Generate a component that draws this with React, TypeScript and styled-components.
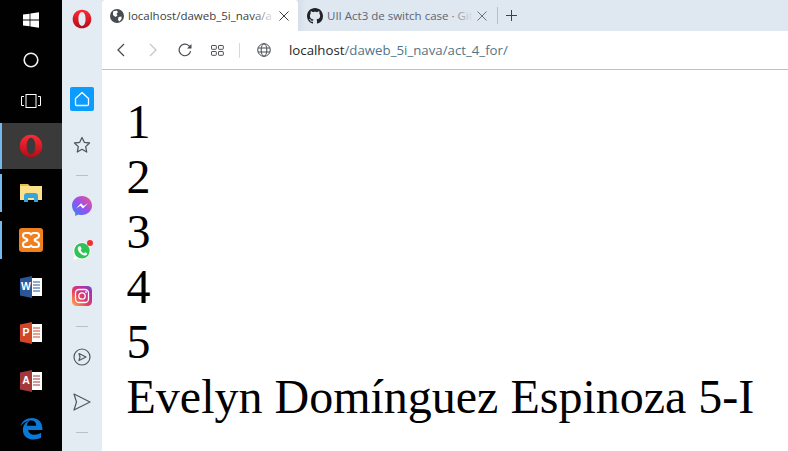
import React from "react";
import styled, { createGlobalStyle } from "styled-components";

const Global = createGlobalStyle`
  html, body { margin: 0; padding: 0; background: #fff; }
  body { width: 788px; height: 451px; overflow: hidden; }
  #root { width: 788px; height: 451px; }
`;
const Screen = styled.div`display: flex; width: 788px; height: 451px; overflow: hidden;`;
const Taskbar = styled.nav`width: 62px; flex: none; background: #010101; display: flex; flex-direction: column;`;
const TaskItem = styled.div<{ $h: number; $active?: boolean; $running?: boolean }>`
  position: relative; height: ${(p) => p.$h}px; flex: none; display: flex; align-items: center; justify-content: center;
  background: ${(p) => (p.$active ? "#3a3a3a" : "transparent")};
  &::before {
    content: ""; display: ${(p) => (p.$running ? "block" : "none")}; position: absolute; left: 0; top: 0; bottom: 0; width: 2px; background: #76b9ed;
  }
`;
const Gap = styled.div<{ $h: number }>`height: ${(p) => p.$h}px; flex: none;`;
const Sidebar = styled.aside`width: 40px; flex: none; background: #e3ebf3; display: flex; flex-direction: column; align-items: center;`;
const SideSlot = styled.div<{ $h: number }>`height: ${(p) => p.$h}px; flex: none; display: flex; align-items: center; justify-content: center; position: relative;`;
const Rule = styled.div`width: 12px; height: 1px; background: #b9c0c8;`;
const Dot = styled.span`position: absolute; right: -2px; top: 6px; width: 6px; height: 6px; border-radius: 50%; background: #f0312f;`;
const Main = styled.div`flex: 1; min-width: 0; display: flex; flex-direction: column;`;
const TabStrip = styled.div`height: 31px; flex: none; background: #dfe8f1; display: flex; align-items: stretch;`;
const Tab = styled.div<{ $active?: boolean; $w: number }>`
  width: ${(p) => p.$w}px; flex: none; display: flex; align-items: center; gap: 4px; box-sizing: border-box;
  padding: 0 ${(p) => (p.$active ? 9 : 10)}px 0 ${(p) => (p.$active ? 8 : 9)}px;
  background: ${(p) => (p.$active ? "#fff" : "linear-gradient(to right, #d6dfe9, #dfe7f0 8px)")};
  border-radius: ${(p) => (p.$active ? "4px 4px 0 0" : "0")};
  font: 11.5px "Open Sans", "Liberation Sans", sans-serif;
  color: ${(p) => (p.$active ? "#3a3f47" : "#5d6670")};
`;
const TabTitle = styled.span<{ $fade: string }>`
  flex: 1; min-width: 0; white-space: nowrap; position: relative;
  &::after { content: ""; position: absolute; right: 0; top: 0; bottom: 0; width: 22px; background: linear-gradient(to right, transparent, ${(p) => p.$fade}); }
`;
const Divider = styled.div`width: 1px; height: 17px; background: #b5bfc9; align-self: center;`;
const NewTab = styled.div`width: 26px; display: flex; align-items: center; justify-content: center;`;
const Toolbar = styled.div`height: 38px; flex: none; background: #fff; border-bottom: 1px solid #bcc1c6; display: flex; align-items: center; padding-left: 9px;`;
const ToolIcon = styled.div<{ $w: number; $ml?: number }>`width: ${(p) => p.$w}px; margin-left: ${(p) => p.$ml ?? 0}px; flex: none; display: flex; align-items: center; justify-content: center;`;
const Sep = styled.div`width: 1px; height: 15px; background: #d5d9de; margin: 0 16px 0 4px;`;
const Url = styled.div`margin-left: 17px; font: 13.25px "Open Sans", "Liberation Sans", sans-serif; color: #557585; white-space: nowrap;`;
const Host = styled.span`color: #22262b;`;
const Page = styled.main`flex: 1; padding: 24px 0 0 24.5px; font: 48px "Liberation Serif", "Times New Roman", serif; color: #000; white-space: nowrap;`;

const OperaLogo = ({ s, id }: { s: number; id: string }) => (
  <svg width={s} height={s} viewBox="0 0 24 24">
    <defs><linearGradient id={id} x1="0" y1="0" x2="0" y2="1"><stop offset="0" stopColor="#ff2a35" /><stop offset="1" stopColor="#b30d18" /></linearGradient></defs>
    <path fill={`url(#${id})`} fillRule="evenodd" d="M12 .8C5.600.8 .8 5.700.8 12s4.800 11.200 11.200 11.200S23.200 18.300 23.200 12 18.400.8 12 .8zm0 2.900c2.700 0 4.300 3.700 4.300 8.300s-1.600 8.300-4.300 8.300S7.700 16.600 7.700 12 9.300 3.700 12 3.700z" />
  </svg>
);
const WinLogo = () => (
  <svg width="16" height="16" viewBox="0 0 16 16"><path fill="#fff" d="M0 2.600 6.600 1.700V7.500H0zM7.400 1.500 16 .2V7.500H7.400zM0 8.400H6.600V14.300L0 13.400zM7.400 8.400H16V15.800L7.400 14.500z" /></svg>
);
const Cortana = () => (
  <svg width="16" height="16" viewBox="0 0 16 16"><circle cx="8" cy="8" r="6.800" fill="none" stroke="#f1f1f1" strokeWidth="1.600" /></svg>
);
const TaskView = () => (
  <svg width="20" height="15" viewBox="0 0 20 15" fill="none" stroke="#fff" strokeWidth="1"><rect x="5" y=".5" width="10" height="13" /><path d="M3 2.500H.5V11.500H3M17 2.500H19.500V11.500H17" /></svg>
);
const Folder = () => (
  <svg width="22" height="20" viewBox="0 0 22 20"><path fill="#e4bd52" d="M0 1h8l2 2h12v4H0z" /><path fill="#fde08a" d="M0 3h22v14H0z" /><path fill="#35a6dc" d="M4 13c0-2 1-3 3-3h8c2 0 3 1 3 3v6h-4v-4H8v4H4z" /></svg>
);
const Xampp = () => (
  <svg width="24" height="24" viewBox="0 0 24 24"><rect width="24" height="24" rx="3" fill="#f0801e" /><path fill="none" stroke="#fff" strokeWidth="2" d="M6.500 5h3.500c1 0 1.500 1.500 2 1.500S13 5 14 5h3.500C19 5 20 6 20 7.500S19 10 17.500 10.500 15.500 11.500 15.500 12s.5 1 2 1.500 2.500 1.500 2.500 3S19 19 17.500 19H14c-1 0-1.500-1.500-2-1.500S11 19 10 19H6.500C5 19 4 18 4 16.500s1-2.500 2.500-3 2-1 2-1.500-.5-1-2-1.500S4 9 4 7.500 5 5 6.500 5z" /></svg>
);
const Office = ({ c, page }: { c: string; page: React.ReactNode }) => (
  <svg width="24" height="24" viewBox="0 0 24 24"><path fill="#fff" d="M10 3h13v18H10z" />{page}<path fill={c} d="M1 3.500 13 1v22L1 20.500z" /></svg>
);
const lines = (c: string) => <path stroke={c} strokeWidth="1.200" d="M14 7h7M14 10h7M14 13h7M14 16h7" />;
const Letter = styled.span`
  position: absolute; left: 1.500px; top: 5px; width: 11px; text-align: center;
  font: bold 10.500px "Liberation Sans", sans-serif; color: #fff;
`;
const OfficeWrap = styled.div`position: relative; width: 24px; height: 24px;`;
const EdgeLogo = () => (
  <svg width="23" height="23" viewBox="0 0 24 24"><path fill="#0a78d7" d="M12.500 1C19 1 23.500 5.500 23.500 13.500H8.600c.3 3.200 2.900 5 6.200 5 2.700 0 5.200-.8 7.200-2v5.200c-2.300 1.200-5 1.800-8 1.800C7 23.500 3 19.300 3 13.500c0-4.700 3-8.700 7.300-9.800-2 1.500-3 3.300-3.200 5.300h9.800C16.900 5.500 15 3.700 11.500 3.700 7 3.700 3 6.200.5 10 1.500 5 6 1 12.500 1z" /></svg>
);
const HomeIcon = () => (
  <svg width="24" height="24" viewBox="0 0 24 24"><rect width="24" height="24" rx="2" fill="#0a9cff" /><path fill="none" stroke="#fff" strokeWidth="1.300" strokeLinejoin="round" d="M5.500 11.500 12 5.500l6.500 6v5.800c0 .8-.5 1.200-1.200 1.200H6.700c-.7 0-1.200-.4-1.200-1.200z" /></svg>
);
const Star = () => (
  <svg width="18" height="18" viewBox="0 0 18 18"><path fill="none" stroke="#50585f" strokeWidth="1.300" strokeLinejoin="round" d="M9 1.500 11.300 6.300 16.500 7 12.700 10.600 13.700 16 9 13.300 4.300 16 5.300 10.600 1.500 7 6.700 6.300z" /></svg>
);
const Messenger = () => (
  <svg width="20" height="20" viewBox="0 0 20 20">
    <defs><linearGradient id="ms" x1="0" y1="1" x2="1" y2="0"><stop offset="0" stopColor="#2a8cf5" /><stop offset=".5" stopColor="#9a4ff0" /><stop offset="1" stopColor="#f2567e" /></linearGradient></defs>
    <path fill="url(#ms)" d="M10 0C4.400 0 0 4.100 0 9.600c0 2.900 1.200 5.400 3.200 7.100V20l3-1.600c1.200.4 2.500.6 3.800.6 5.600 0 10-4.100 10-9.400S15.600 0 10 0z" />
    <path fill="#fff" d="M4 12.500 9 7.200l2.600 2.700 4.400-2.700-5 5.300-2.600-2.700z" />
  </svg>
);
const Whatsapp = () => (
  <svg width="18" height="18" viewBox="0 0 18 18"><path fill="#fff" d="M9 .2a8.600 8.600 0 0 0-7.300 13L.4 17.800l4.700-1.300A8.600 8.600 0 1 0 9 .2z" /><circle cx="9" cy="8.800" r="7.700" fill="#2fc254" /><path fill="#fff" d="M6.100 4.300c-.9.400-1.500 1.400-1.300 2.800.5 2.900 3.400 5.900 6.300 6.400 1.500.2 2.600-.3 3-1.300.1-.4.100-.8 0-.9l-2-1c-.3 0-.9 1-1.200 1.100-1-.2-3.100-2.200-3.300-3.300.1-.4 1.100-.9 1-1.300L7.600 4.500c-.2-.3-1-.4-1.500-.2z" /></svg>
);
const Instagram = () => (
  <svg width="20" height="20" viewBox="0 0 20 20">
    <defs><linearGradient id="ig" x1="0" y1="1" x2="1" y2="0"><stop offset="0" stopColor="#fdb44b" /><stop offset=".4" stopColor="#e6405f" /><stop offset=".75" stopColor="#b42fa5" /><stop offset="1" stopColor="#5458d0" /></linearGradient></defs>
    <rect width="20" height="20" rx="4.500" fill="url(#ig)" />
    <rect x="3.500" y="3.500" width="13" height="13" rx="3.500" fill="none" stroke="#fff" strokeWidth="1.300" />
    <circle cx="10" cy="10" r="3.200" fill="none" stroke="#fff" strokeWidth="1.300" />
    <circle cx="14" cy="6" r=".9" fill="#fff" />
  </svg>
);
const Player = () => (
  <svg width="18" height="18" viewBox="0 0 18 18" fill="none" stroke="#50585f" strokeWidth="1.200"><circle cx="9" cy="9" r="8" /><path strokeLinejoin="round" d="M6 5.500 13 9 6 12.500 7 9z" /></svg>
);
const Send = () => (
  <svg width="18" height="18" viewBox="0 0 18 18"><path fill="none" stroke="#50585f" strokeWidth="1.200" strokeLinejoin="round" d="M1 1 17 9 1 17 3.500 9z" /></svg>
);
const Globe = ({ c = "#474c52", s = 14 }: { c?: string; s?: number }) => (
  <svg width={s} height={s} viewBox="0 0 14 14" fill="none" stroke={c} strokeWidth="1"><circle cx="7" cy="7" r="6.300" /><ellipse cx="7" cy="7" rx="2.800" ry="6.300" /><path d="M1 5h12M1 9h12" /></svg>
);
const GlobeSolid = () => (
  <svg width="14" height="14" viewBox="0 0 14 14"><circle cx="7" cy="7" r="7" fill="#474c52" /><path fill="#fff" d="M3 2.500 6.500 1.500 8 3 6.500 5 7.500 6.500 5.500 8 3 6zM8.500 8 11.500 7.500 11.500 10 9.500 12.500 8 11z" /></svg>
);
const GitHub = () => (
  <svg width="16" height="16" viewBox="0 0 16 16"><path fill="#202428" d="M8 0C3.580 0 0 3.580 0 8c0 3.540 2.290 6.530 5.470 7.590.4.070.55-.17.550-.38 0-.19-.01-.82-.01-1.490-2.010.37-2.530-.49-2.690-.94-.09-.23-.48-.94-.82-1.130-.28-.15-.68-.52-.01-.53.630-.01 1.080.58 1.230.82.720 1.210 1.870.87 2.330.66.070-.52.280-.87.510-1.070-1.780-.2-3.640-.89-3.640-3.950 0-.87.310-1.590.820-2.150-.08-.2-.36-1.020.08-2.120 0 0 .67-.21 2.200.82.640-.18 1.320-.27 2-.27s1.360.09 2 .27c1.530-1.040 2.200-.82 2.200-.82.440 1.100.16 1.920.08 2.120.51.560.82 1.270.82 2.150 0 3.070-1.870 3.750-3.650 3.950.29.250.54.730.54 1.480 0 1.070-.01 1.930-.01 2.200 0 .21.150.46.550.38A8.010 8.010 0 0 0 16 8c0-4.420-3.580-8-8-8z" /></svg>
);
const Close = ({ c }: { c: string }) => (
  <svg width="10" height="10" viewBox="0 0 10 10"><path stroke={c} strokeWidth="1" d="M.5.5l9 9M9.500.5l-9 9" /></svg>
);
const Plus = () => (
  <svg width="11" height="11" viewBox="0 0 11 11"><path stroke="#3c4249" strokeWidth="1" d="M5.500 0v11M0 5.500h11" /></svg>
);
const Chevron = ({ left, c }: { left?: boolean; c: string }) => (
  <svg width="9" height="14" viewBox="0 0 9 14"><path fill="none" stroke={c} strokeWidth="1.300" d={left ? "M8 1 2 7l6 6" : "M1 1l6 6-6 6"} /></svg>
);
const Reload = () => (
  <svg width="14" height="14" viewBox="0 0 14 14" fill="none" stroke="#474c52" strokeWidth="1.200"><path d="M12.600 8.200A5.800 5.800 0 1 1 10.800 2.600L12.800 4.500" /><path fill="#474c52" stroke="none" d="M13.500 1v4.500H9z" /></svg>
);
const Grid = () => (
  <svg width="13" height="11" viewBox="0 0 13 11" fill="none" stroke="#474c52" strokeWidth="1"><rect x=".5" y=".5" width="4.800" height="3.800" rx=".6" /><rect x="7.500" y=".5" width="4.800" height="3.800" rx=".6" /><rect x=".5" y="6.500" width="4.800" height="3.800" rx=".6" /><rect x="7.500" y="6.500" width="4.800" height="3.800" rx=".6" /></svg>
);

export default function App() {
  return (
    <Screen>
      <Global />
      <Taskbar>
        <TaskItem $h={40}><WinLogo /></TaskItem>
        <TaskItem $h={40}><Cortana /></TaskItem>
        <TaskItem $h={43}><TaskView /></TaskItem>
        <TaskItem $h={46} $active $running><OperaLogo s={24} id="op1" /></TaskItem>
        <Gap $h={5} />
        <TaskItem $h={38} $running><Folder /></TaskItem>
        <Gap $h={9} />
        <TaskItem $h={38} $running><Xampp /></TaskItem>
        <TaskItem $h={56}><OfficeWrap><Office c="#2b5797" page={lines("#2b5797")} /><Letter>W</Letter></OfficeWrap></TaskItem>
        <TaskItem $h={36}><OfficeWrap><Office c="#d24726" page={lines("#d24726")} /><Letter>P</Letter></OfficeWrap></TaskItem>
        <TaskItem $h={60}><OfficeWrap><Office c="#a4373a" page={lines("#a4373a")} /><Letter>A</Letter></OfficeWrap></TaskItem>
        <TaskItem $h={34}><EdgeLogo /></TaskItem>
      </Taskbar>
      <Sidebar>
        <SideSlot $h={38}><OperaLogo s={20} id="op2" /></SideSlot>
        <SideSlot $h={42} />
        <SideSlot $h={38}><HomeIcon /></SideSlot>
        <SideSlot $h={54}><Star /></SideSlot>
        <SideSlot $h={6}><Rule /></SideSlot>
        <SideSlot $h={56}><Messenger /></SideSlot>
        <SideSlot $h={34}><Whatsapp /><Dot /></SideSlot>
        <SideSlot $h={56}><Instagram /></SideSlot>
        <SideSlot $h={4}><Rule /></SideSlot>
        <SideSlot $h={58}><Player /></SideSlot>
        <SideSlot $h={32}><Send /></SideSlot>
        <SideSlot $h={28}><Rule /></SideSlot>
      </Sidebar>
      <Main>
        <TabStrip>
          <Tab $active $w={196}><GlobeSolid /><TabTitle $fade="#fff">localhost/daweb_5i_nava/a</TabTitle><Close c="#3a3f47" /></Tab>
          <Tab $w={199}><GitHub /><TabTitle $fade="#dfe7f0">UII Act3 de switch case · Git</TabTitle><Close c="#68717a" /></Tab>
          <Divider />
          <NewTab><Plus /></NewTab>
        </TabStrip>
        <Toolbar>
          <ToolIcon $w={18}><Chevron left c="#474c52" /></ToolIcon>
          <ToolIcon $w={48}><Chevron c="#c3c8cd" /></ToolIcon>
          <ToolIcon $w={16}><Reload /></ToolIcon>
          <ToolIcon $w={36} $ml={6}><Grid /></ToolIcon>
          <Sep />
          <ToolIcon $w={16}><Globe /></ToolIcon>
          <Url><Host>localhost</Host>/daweb_5i_nava/act_4_for/</Url>
        </Toolbar>
        <Page>
          <div>1</div><div>2</div><div>3</div><div>4</div><div>5</div>
          <div>Evelyn Domínguez Espinoza 5-I</div>
        </Page>
      </Main>
    </Screen>
  );
}
